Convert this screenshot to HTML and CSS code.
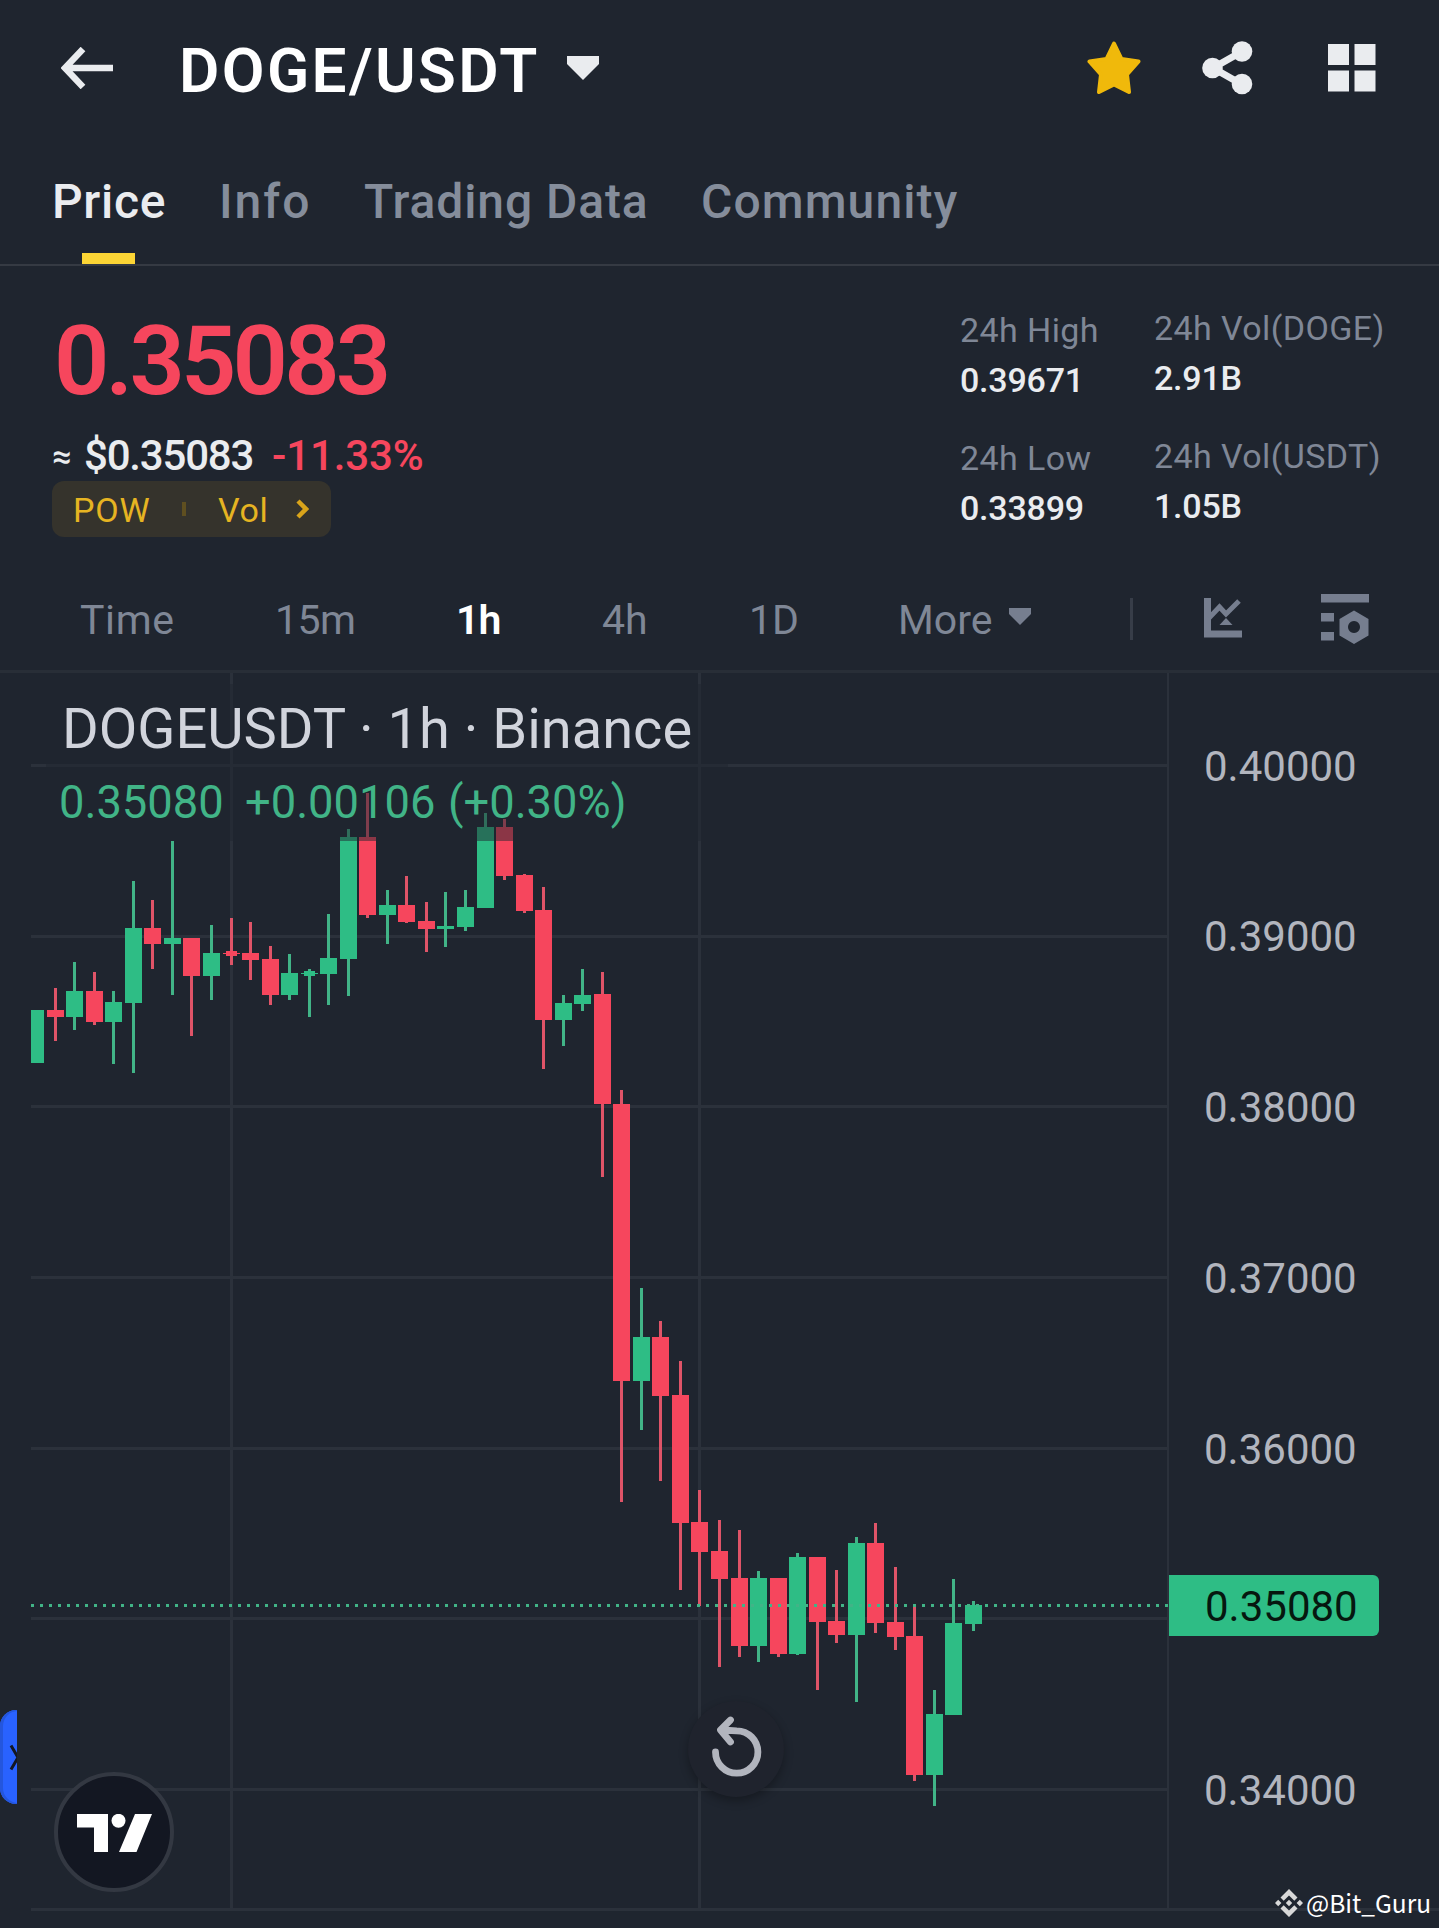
FILE: index.html
```html
<!DOCTYPE html>
<html lang="en">
<head>
    <meta charset="UTF-8">
    <meta name="viewport" content="width=device-width, initial-scale=1.0">
    <title>DOGE/USDT</title>
    <link rel="stylesheet" href="styles.css">
</head>
<body>

    <header class="topbar">
        <svg class="back" width="52" height="42" viewBox="0 0 52 42">
            <path d="M22 2 L4 21 L22 40 M4 21 H52" fill="none" stroke="#eaecef" stroke-width="6.5"/>
        </svg>
        <h1 class="pair">DOGE/USDT</h1>
        <svg class="pair-arrow" width="32" height="24" viewBox="0 0 32 24">
            <path d="M0 0H32V8L16 24L0 8Z" fill="#eaecef"/>
        </svg>
        <div class="actions">
            <svg width="54" height="54" viewBox="0 0 54 54">
                <path d="M27 2.5 L34.5 18 L51.5 20.5 L40 33.5 L42 51 L27 43.5 L12 51 L14 33.5 L2.500 20.5 L19.500 18Z" fill="#f0b90b" stroke="#f0b90b" stroke-width="4" stroke-linejoin="round"/>
            </svg>
            <svg width="51" height="54" viewBox="0 0 51 54">
                <path d="M40 10.500L11 27L40 43.500" fill="none" stroke="#eaecef" stroke-width="7"/>
                <circle cx="40" cy="10.500" r="10.300" fill="#eaecef"/>
                <circle cx="10.500" cy="27" r="10.300" fill="#eaecef"/>
                <circle cx="40" cy="43" r="10.300" fill="#eaecef"/>
            </svg>
            <svg width="48" height="48" viewBox="0 0 48 48">
                <path d="M0 0h21v21H0zM26.500 0h21v21h-21zM0 26.500h21v21H0zM26.500 26.500h21v21h-21z" fill="#eaecef"/>
            </svg>
        </div>
    </header>

    <nav class="tabs">
        <a class="tab active">Price</a>
        <a class="tab info">Info</a>
        <a class="tab trading">Trading Data</a>
        <a class="tab community">Community</a>
    </nav>

    <section class="summary">
        <div class="price-box">
            <div class="price">0.35083</div>
            <div class="sub">
                <span class="approx">≈</span>
                <span class="usd">$0.35083</span>
                <span class="change">-11.33%</span>
            </div>
            <div class="tags">
                <span class="tag-pow">POW</span>
                <i class="tag-line"></i>
                <span class="tag-vol">Vol</span>
                <svg width="13" height="20" viewBox="0 0 13 20">
                    <path d="M2 2L10 10L2 18" fill="none" stroke="#d9a41a" stroke-width="4.500"/>
                </svg>
            </div>
        </div>
        <div class="stats">
            <div class="stat">
                <div class="label">24h High</div>
                <div class="value">0.39671</div>
            </div>
            <div class="stat">
                <div class="label">24h Low</div>
                <div class="value">0.33899</div>
            </div>
        </div>
        <div class="stats vol">
            <div class="stat">
                <div class="label">24h Vol(DOGE)</div>
                <div class="value">2.91B</div>
            </div>
            <div class="stat">
                <div class="label">24h Vol(USDT)</div>
                <div class="value">1.05B</div>
            </div>
        </div>
    </section>

    <div class="intervals">
        <span class="int-time">Time</span>
        <span class="int-15m">15m</span>
        <span class="int-1h">1h</span>
        <span class="int-4h">4h</span>
        <span class="int-1d">1D</span>
        <span class="int-more">More</span>
        <svg class="more-arrow" width="22" height="17" viewBox="0 0 22 17">
            <path d="M0 0H22V6L11 17L0 6Z" fill="#767e8f"/>
        </svg>
        <i class="int-line"></i>
        <svg class="ico-line" width="38" height="40" viewBox="0 0 38 40">
            <path d="M3.500 0V36H38" fill="none" stroke="#767e8f" stroke-width="7"/>
            <path d="M5 20L15.500 9L22 16L35 3" fill="none" stroke="#767e8f" stroke-width="5"/>
            <path d="M22 20L28.500 27H15.500Z" fill="#767e8f"/>
        </svg>
        <svg class="ico-set" width="48" height="50" viewBox="0 0 48 50">
            <path d="M0 0H48V8.500H0ZM0 19H13V27.500H0ZM0 38H13V46.500H0Z" fill="#767e8f"/>
            <path fill-rule="evenodd" d="M33 16.500L47.500 25V41.500L33 50L18.500 41.500V25ZM33 27a6 6 0 1 0 .01 0Z" fill="#767e8f"/>
        </svg>
    </div>

    <main class="chart">
        <svg id="plot" width="1439" height="1258" viewBox="0 670 1439 1258">
            <g id="grid"></g>
            <g id="candles"></g>
            <path d="M31 1605.500H1168" fill="none" stroke="#41b487" stroke-width="3" stroke-dasharray="3 6"/>
            <path d="M1169 1575H1373a6 6 0 0 1 6 6V1630a6 6 0 0 1 -6 6H1169Z" fill="#2ebd85"/>
            <g id="labels"></g>
        </svg>

        <div class="legend">
            <div class="legend-title">DOGEUSDT · 1h · Binance</div>
            <div class="legend-quote"><span class="q-last">0.35080</span><span class="q-diff">+0.00106</span><span class="q-pct">(+0.30%)</span></div>
        </div>

        <div class="side-tab">
            <svg width="17" height="94" viewBox="0 0 17 94">
                <path d="M11 35.500L18 47.500L11 59.500" fill="none" stroke="#131722" stroke-width="3"/>
            </svg>
        </div>

        <div class="reset">
            <svg width="96" height="96" viewBox="0 0 96 96">
                <path d="M27.500 51A21.200 21.200 0 1 0 48.700 29.800Q40 29.300 34 29M42.500 19L32.500 29L42.500 41" fill="none" stroke="#b2b5be" stroke-width="6.800" stroke-linecap="round" stroke-linejoin="round"/>
            </svg>
        </div>

        <div class="tv-logo">
            <svg width="76" height="38" viewBox="0 0 76 38">
                <path d="M0 0H31V38H17V13.500H0ZM58 0H75L59.500 38H42Z" fill="#fff"/>
                <circle cx="41.500" cy="6.800" r="7" fill="#fff"/>
            </svg>
        </div>

        <div class="watermark">
            <svg width="28" height="28" viewBox="0 0 28 28">
                <path d="M14 0L22.500 8.500L19.300 11.700L14 6.400L8.700 11.700L5.500 8.500ZM14 28L22.500 19.500L19.300 16.300L14 21.600L8.700 16.300L5.500 19.500ZM14 10.800L17.200 14L14 17.200L10.800 14ZM3.200 10.800L6.400 14L3.200 17.200L0 14ZM24.800 10.800L28 14L24.800 17.200L21.600 14Z" fill="#d8d8d8"/>
            </svg>
            <span>@Bit_Guru</span>
        </div>
    </main>

    <script>
        // x, high, open/close top, open/close bottom, low, color
        const candles = [
            [55.5, 988, 1010, 1017, 1041, "r"], [74.5, 962, 991, 1017, 1030, "g"],
            [94.5, 972, 991, 1022, 1025, "r"], [113.5, 991, 1002, 1022, 1064, "g"],
            [133.5, 881, 928, 1003, 1073, "g"], [152.5, 900, 928, 944, 969, "r"],
            [172.5, 841, 938, 944, 995, "g"], [191.5, 938, 938, 976, 1036, "r"],
            [211.5, 925, 953, 976, 1000, "g"], [231.5, 918, 951, 956, 965, "r", 11],
            [250.5, 922, 953, 960, 980, "r"], [270.5, 946, 959, 995, 1005, "r"],
            [289.5, 954, 973, 995, 1000, "g"], [309.5, 969, 971, 976, 1017, "g", 11],
            [328.5, 914, 958, 974, 1005, "g"], [348.5, 829, 837, 959, 996, "g"],
            [367.5, 793, 837, 915, 918, "r"], [387.5, 890, 905, 915, 944, "g"],
            [406.5, 876, 905, 922, 923, "r"], [426.5, 902, 921, 929, 952, "r"],
            [445.5, 892, 926, 929, 947, "g"], [465.5, 890, 907, 927, 931, "g"],
            [485.5, 813, 827, 908, 908, "g"], [504.5, 819, 827, 876, 880, "r"],
            [524.5, 874, 875, 911, 913, "r"], [543.5, 887, 910, 1020, 1069, "r"],
            [563.5, 995, 1003, 1020, 1046, "g"], [582.5, 969, 995, 1004, 1011, "g"],
            [602.5, 972, 994, 1104, 1177, "r"], [621.5, 1090, 1104, 1381, 1502, "r"],
            [641.5, 1288, 1337, 1381, 1430, "g"], [660.5, 1321, 1337, 1396, 1481, "r"],
            [680.5, 1361, 1395, 1523, 1590, "r"], [699.5, 1490, 1522, 1552, 1606, "r"],
            [719.5, 1520, 1551, 1579, 1667, "r"], [739.5, 1530, 1578, 1646, 1657, "r"],
            [758.5, 1571, 1578, 1646, 1662, "g"], [778.5, 1578, 1578, 1654, 1657, "r"],
            [797.5, 1553, 1557, 1654, 1655, "g"], [817.5, 1557, 1557, 1622, 1690, "r"],
            [836.5, 1570, 1621, 1635, 1643, "r"], [856.5, 1537, 1543, 1635, 1702, "g"],
            [875.5, 1523, 1543, 1623, 1633, "r"], [895.5, 1567, 1622, 1637, 1650, "r"],
            [914.5, 1606, 1636, 1775, 1781, "r"], [934.5, 1690, 1714, 1775, 1806, "g"],
            [953.5, 1579, 1623, 1715, 1715, "g"], [973.5, 1601, 1605, 1624, 1631, "g"]
        ];

        const rect = (x, y, w, h, cls) =>
            `<rect class="${cls}" x="${x}" y="${y}" width="${w}" height="${h}"/>`;

        // the first candle is cut off by the plot edge
        let html = rect(31, 1010, 13, 53, "body-g");
        candles.forEach(([x, high, top, bottom, low, c, w = 17]) => {
            html += rect(x - 1.5, high, 3, low - high, "wick-" + c);
            html += rect(x - w / 2, top, w, bottom - top, "body-" + c);
            if (w < 17) html += rect(x - 8.5, Math.round((top + bottom) / 2) - 1, 17, 1, "body-" + c);
        });
        document.getElementById("candles").innerHTML = html;

        let grid = rect(0, 670, 1439, 3, "grid-top");
        [765, 936, 1106, 1277, 1448, 1618, 1789].forEach(y => grid += rect(31, y - 1, 1137, 3, "grid-line"));
        [231, 699].forEach(x => grid += rect(x - 1, 673, 3, 1236, "grid-line"));
        grid += rect(1167, 673, 2, 1236, "grid-line");
        grid += rect(31, 1908, 1408, 3, "grid-line");
        document.getElementById("grid").innerHTML = grid;

        const labels = [["0.40000", 766], ["0.39000", 936], ["0.38000", 1107], ["0.37000", 1278], ["0.36000", 1449], ["0.34000", 1790]];
        document.getElementById("labels").innerHTML =
            labels.map(([t, y]) => `<text class="axis" x="1204" y="${y + 14.5}">${t}</text>`).join("") +
            `<text class="axis last" x="1205" y="1621">0.35080</text>`;
    </script>

</body>
</html>
```
FILE: styles.css
```css
body {
    margin: 0;
    width: 1439px;
    height: 1928px;
    overflow: hidden;
    background: #1f252f;
    color: #eaecef;
    font-family: Roboto, "Open Sans", sans-serif;
}
svg {
    display: block;
    flex: none;
}
span, a {
    white-space: nowrap;
}

/* top bar */
.topbar {
    display: flex;
    align-items: center;
    height: 136px;
    padding: 0 63px 0 61px;
    box-sizing: border-box;
}
.pair {
    width: 388px;
    margin: 4px 0 0 66px;
    color: #fff;
    font-size: 62px;
    font-weight: 600;
    letter-spacing: 2.4px;
    white-space: nowrap;
}
.actions {
    display: flex;
    align-items: center;
    margin-left: auto;
}
.actions svg + svg {
    margin-left: 61px;
}
.actions svg:last-child {
    margin-left: 75px;
}

/* tabs */
.tabs {
    display: flex;
    height: 128px;
    padding-left: 52px;
    border-bottom: 2px solid #353a43;
    font-size: 48px;
    font-weight: 500;
    line-height: 132px;
    color: #858d9b;
}
.tab {
    position: relative;
    letter-spacing: 1px;
}
.active {
    width: 115px;
    color: #eaecef;
    letter-spacing: 0.7px;
}
.active::after {
    content: "";
    position: absolute;
    left: 30px;
    bottom: 0;
    width: 53px;
    height: 11px;
    background: #fcd535;
}
.info {
    width: 90px;
    margin-left: 52px;
    letter-spacing: 2px;
}
.trading {
    width: 286px;
    margin-left: 55px;
    letter-spacing: 0.9px;
}
.community {
    margin-left: 51px;
    letter-spacing: 1.1px;
}

/* price and 24h numbers */
.summary {
    display: flex;
    height: 304px;
}
.price-box {
    width: 908px;
    padding: 39px 0 0 52px;
}
.price {
    margin-left: 2px;
    font-size: 97px;
    font-weight: 600;
    line-height: 112px;
    letter-spacing: -3.8px;
    color: #f6465d;
}
.sub {
    display: flex;
    margin-top: 15px;
    font-size: 42px;
    line-height: 48px;
    font-weight: 500;
}
.approx {
    width: 32px;
    font-size: 34px;
}
.usd {
    width: 188px;
    letter-spacing: -1.2px;
}
.change {
    color: #f6465d;
    letter-spacing: -0.1px;
}
.tags {
    display: flex;
    align-items: center;
    width: 279px;
    height: 56px;
    margin-top: 1px;
    padding-left: 21px;
    box-sizing: border-box;
    border-radius: 12px;
    background: #35332c;
    color: #e6b422;
    font-size: 34px;
}
.tag-pow {
    width: 109px;
    padding-top: 1px;
    letter-spacing: 0.8px;
}
.tag-line {
    width: 4px;
    height: 14px;
    margin-right: 32px;
    background: #5f4f20;
}
.tag-vol {
    width: 78px;
    padding-top: 1px;
    letter-spacing: 0.6px;
}
.stats {
    width: 194px;
    padding-top: 44px;
}
.vol {
    width: 270px;
    padding-top: 42px;
}
.stat {
    height: 128px;
    font-size: 34px;
    line-height: 40px;
    white-space: nowrap;
}
.label {
    height: 50px;
    letter-spacing: 0.4px;
    color: #7f8796;
}
.value {
    font-weight: 500;
    letter-spacing: -0.2px;
}

/* interval row */
.intervals {
    display: flex;
    align-items: center;
    height: 100px;
    font-size: 41px;
    color: #7f8796;
}
.int-time {
    width: 195px;
    margin-left: 80px;
    letter-spacing: 0.6px;
}
.int-15m {
    width: 181px;
    letter-spacing: -0.5px;
}
.int-1h {
    width: 146px;
    color: #fff;
    font-weight: 600;
    letter-spacing: -1px;
}
.int-4h {
    width: 147px;
}
.int-1d {
    width: 149px;
}
.int-more {
    width: 111px;
}
.more-arrow {
    margin-top: -7px;
}
.int-line {
    width: 3px;
    height: 42px;
    margin: -3px 71px 0 99px;
    background: #373d48;
}
.ico-line {
    margin-top: -4px;
}
.ico-set {
    margin: -2px 0 0 79px;
}

/* chart */
.chart {
    position: relative;
    height: 1258px;
}
.body-g {
    fill: #2ebd85;
}
.body-r {
    fill: #f6465d;
}
.wick-g {
    fill: #41b487;
}
.wick-r {
    fill: #df5468;
}
.grid-line {
    fill: #2b313b;
}
.grid-top {
    fill: #282e37;
}
.axis {
    font-size: 42px;
    fill: #b2b5be;
}
.last {
    fill: #06170f;
}
.legend {
    position: absolute;
    left: 46px;
    top: 14px;
    width: 682px;
    height: 157px;
    background: rgba(31, 37, 47, 0.5);
}
.legend-title {
    padding: 11px 0 0 16px;
    font-size: 56px;
    line-height: 68px;
    color: #d1d4dc;
    white-space: nowrap;
}
.legend-quote {
    display: flex;
    padding-left: 13px;
    font-size: 45.3px;
    line-height: 80px;
    color: #41b487;
}
.q-last {
    width: 186px;
}
.q-diff {
    width: 203px;
}
.side-tab {
    position: absolute;
    left: 0;
    top: 1040px;
    width: 17px;
    height: 94px;
    box-sizing: border-box;
    border-radius: 16px 0 0 16px;
    box-shadow: inset 2px 0 0 1px #2456dd;
    background: #2962ff;
    overflow: hidden;
}
.side-tab svg {
    position: relative;
}
.reset {
    position: absolute;
    left: 688px;
    top: 1031px;
    border-radius: 50%;
    background: #1f232d;
    box-shadow: 0 4px 10px rgba(0, 0, 0, 0.3);
}
.tv-logo {
    position: absolute;
    left: 54px;
    top: 1102px;
    display: flex;
    align-items: center;
    justify-content: center;
    width: 111px;
    height: 111px;
    padding: 1px 0 0 1px;
    box-sizing: content-box;
    border: 4px solid #333842;
    border-radius: 50%;
    background: #131722;
}
.watermark {
    position: absolute;
    left: 1275px;
    top: 1215px;
    display: flex;
    align-items: center;
    gap: 3px;
    color: #fff;
    font-family: "Noto Sans CJK SC", "Noto Sans", sans-serif;
    font-size: 24.500px;
    line-height: 36px;
}
```
